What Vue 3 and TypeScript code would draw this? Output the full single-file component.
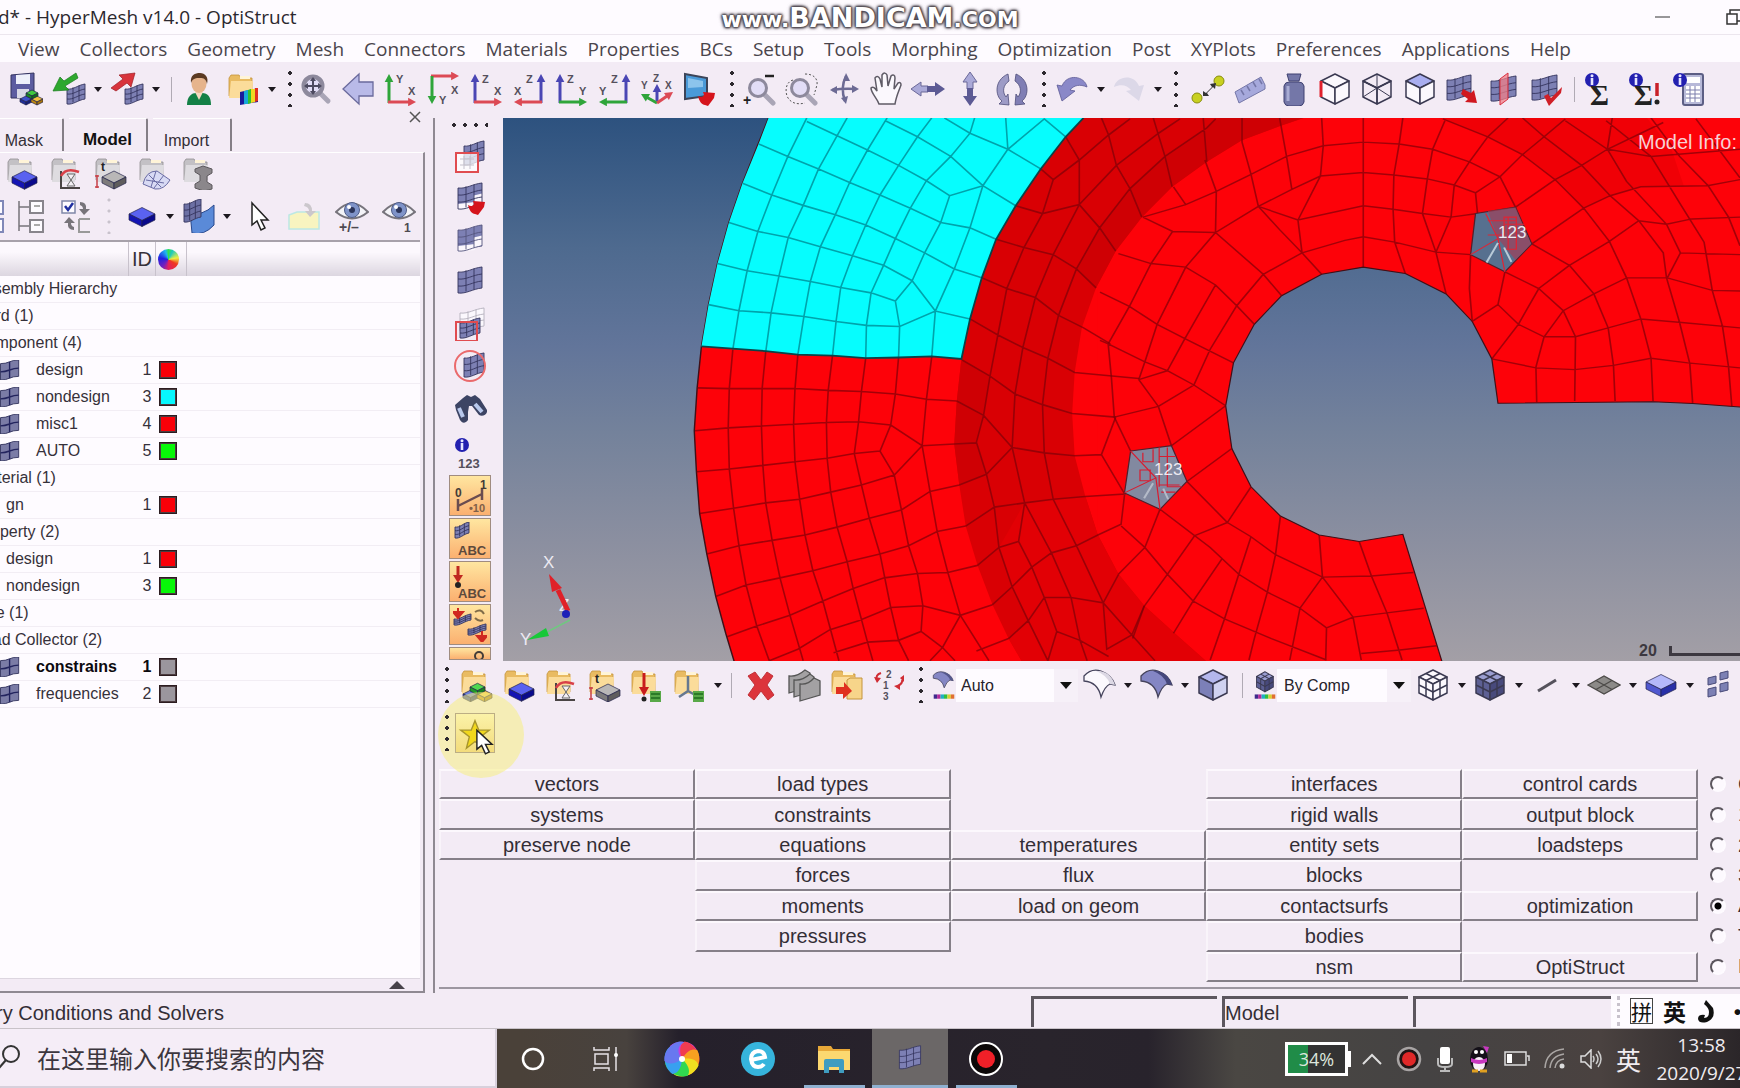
<script setup lang="ts">
import { ref } from 'vue'

type Tool = { icon: string; label: string; menu?: boolean }

/* ---------- icon building blocks (34 x 34 grid) ---------- */
const sheet = (x: number, y: number, w: number, h: number, fill = '#7d80b4', line = '#34345e', part = 'all') => {
  const curve = (cy: number) => `M${x} ${cy + 5}C${x + w * 0.35} ${cy + 6} ${x + w * 0.6} ${cy + 1} ${x + w} ${cy}`
  const body = `<path d="${curve(y)}v${h}C${x + w * 0.6} ${y + h + 1} ${x + w * 0.35} ${y + h + 6} ${x} ${y + h + 5}z" fill="${fill}"/>`
  const rows = [0, 1, 2, 3].map((i) => curve(y + (h * i) / 3)).join('')
  const cols = [0, 1, 2, 3].map((i) => `M${x + (w * i) / 3} ${y + 5 - i * 1.7}v${h}`).join('')
  const gap = part === 'corner' ? `<path d="M${x + w * 0.66} ${y + h * 0.6}l${w * 0.34} -2v${h * 0.45}l-${w * 0.34} 3zM${x} ${y + h}l${w * 0.7} -2v6l-${w * 0.7} 2z" fill="#fbf7fd"/>` : ''
  return `${body}${gap}<path d="${rows}${cols}" fill="none" stroke="${line}" stroke-width=".9"/>`
}
const slab = (x: number, y: number, w: number, top: string, left: string, right: string, d = 6) => {
  const h = w * 0.5
  return `<g stroke="#22224a" stroke-width=".7" stroke-linejoin="round"><path d="M${x} ${y}l${w / 2} -${h / 2}l${w / 2} ${h / 2}l-${w / 2} ${h / 2}z" fill="${top}"/><path d="M${x} ${y}l${w / 2} ${h / 2}v${d}l-${w / 2} -${h / 2}z" fill="${left}"/><path d="M${x + w} ${y}l-${w / 2} ${h / 2}v${d}l${w / 2} -${h / 2}z" fill="${right}"/></g>`
}
const blueSlab = (x: number, y: number, w = 25) => slab(x, y, w, '#5a62f0', '#1414b4', '#0a0a8c')
const graySlab = (x: number, y: number, w = 24) => slab(x, y, w, '#b9b7b7', '#7d7b7b', '#5f5d5d')
const folder = (c1 = '#fbdc9a', c2 = '#e9bb62', e = '#c4943c') =>
  `<path d="M3 6l2-3h8l2 3h11v18H3z" fill="${c2}" stroke="${e}" stroke-width=".8"/><path d="M5 9h22l-1 17H3z" fill="${c1}"/><path d="M14 4h10v3H14z" fill="#fff4d8"/>`
const grayFolder = folder('#dedce0', '#c3c1c5', '#8f8d91')
const letter = (x: number, y: number, t: string, s = 11, f = '#55505c') =>
  `<text x="${x}" y="${y}" font-family="Liberation Sans, sans-serif" font-weight="700" font-size="${s}" fill="${f}">${t}</text>`
const ray = (x1: number, y1: number, x2: number, y2: number, c: string) => {
  const a = Math.atan2(y2 - y1, x2 - x1)
  const p = (k: number, o: number) => `${(x2 - Math.cos(a + o) * k).toFixed(1)} ${(y2 - Math.sin(a + o) * k).toFixed(1)}`
  return `<path d="M${x1} ${y1}L${p(5, 0)}" stroke="${c}" stroke-width="3"/><path d="M${x2} ${y2}L${p(9, 0.5)}L${p(9, -0.5)}z" fill="${c}"/>`
}
const R = '#dc4a55', G = '#2fa53a', B = '#4a46b4'
const cube = (top: string, left: string, right: string, extra = '') =>
  `<g stroke="#3b3a52" stroke-width="1.500" stroke-linejoin="round"><path d="M17 2L31 9L17 16L3 9z" fill="${top}"/><path d="M3 9L17 16V32L3 25z" fill="${left}"/><path d="M31 9L17 16V32L31 25z" fill="${right}"/>${extra}</g>`
const gridCube = (f1: string, f2: string, f3: string) =>
  cube(f1, f2, f3, '<path d="M10 5.500L24 12.500V28.500M24 5.500L10 12.500V28.500M3 17L17 24L31 17" fill="none"/>')
const info = '<circle cx="9" cy="8" r="7" fill="#2320b0"/><path d="M9 6v7" stroke="#e6e6ff" stroke-width="2.600"/><circle cx="9" cy="3.700" r="1.500" fill="#e6e6ff"/>'
const redHook = '<path d="M15 24c3 2 5 1 6-1l-1-3 12 1-1 5-6 8-3-1c-3 0-6-4-7-9z" fill="#d5141c"/>'
const lens = (cx: number, cy: number) => `<path d="M${cx + 6} ${cy + 6}l9 9" stroke="#a9a5b6" stroke-width="5" stroke-linecap="round"/><circle cx="${cx}" cy="${cy}" r="8.500" fill="#e2ddf6" stroke="#8d899c" stroke-width="3"/>`
const eye = '<path d="M1 13Q17 -4 33 13Q17 26 1 13z" fill="#f4f4f8" stroke="#77747c" stroke-width="2"/><circle cx="17" cy="11" r="7.500" fill="#7f93c8" stroke="#4f5c88"/><circle cx="17" cy="11" r="3" fill="#2c355a"/><circle cx="14" cy="8" r="2" fill="#fff"/>'
const rainbow = (y: number) => ['#402a8c', '#b02a9a', '#20b0c0', '#30c040', '#d8d030', '#e07030'].map((c, i) => `<path d="M${i * 4 + 2} ${y}h4v5h-4z" fill="${c}"/>`).join('')
const pointer = (x: number, y: number) => `<path d="M${x} ${y}v22l5-4 4 9 4-2-4-8h7z" fill="#fff" stroke="#222" stroke-width="1.500"/>`
const shell = (f: string, g: string) => `<path d="M2 8Q9 0 19 3Q30 7 33 17L28 16Q23 18 19 29Q16 14 2 13z" fill="${f}" stroke="#45435c" stroke-width="1.300"/><path d="M14 3Q28 2 33 17L28 16Q25 7 14 3z" fill="${g}"/>`

const icons: Record<string, string> = {
  save: `<path d="M2 3l23-2v25L2 26z" fill="#5c5ca0" stroke="#33335e"/><path d="M7 3l14-1v10H7z" fill="#eef0fa"/><path d="M8 17h12v9H8z" fill="#d8d8e6"/>${slab(11, 27, 12, '#3c50c8', '#20309a', '#16207a', 3)}${slab(22, 27, 12, '#f0c040', '#c08a10', '#a87408', 3)}${slab(17, 21, 12, '#40c840', '#188a20', '#107018', 3)}`,
  importMesh: `${sheet(15, 12, 18, 15)}<path d="M24 1l-12 8-4-4-7 14 16-1-4-4 13-8z" fill="#2ea82e" stroke="#187a1c" stroke-width=".7"/>`,
  exportMesh: `${sheet(15, 12, 18, 15)}<path d="M1 16l12-9-4-4 16-2-4 14-4-4-11 8z" fill="#d8343c" stroke="#9c1c24" stroke-width=".7"/>`,
  user: '<path d="M4 33c0-9 5-12 9-12h6c6 0 9 4 9 12z" fill="#138046"/><path d="M12 20h8l-4 8z" fill="#f4d8c0"/><ellipse cx="16" cy="12" rx="7.500" ry="9" fill="#e6b48c"/><path d="M8 11c-1-8 4-10 9-10s9 4 7 11c-1-5-3-6-7-6s-7 0-9 5z" fill="#5b3a22"/>',
  results: `${folder()}<path d="M14 20l18-4v14l-18 3z" fill="#1a1a9a"/><path d="M18 19l4-1v14l-4 0z" fill="#18a8d8"/><path d="M22 18l3-1v14l-3 1z" fill="#30c030"/><path d="M25 17l4 0v13l-4 1z" fill="#f0d820"/><path d="M29 16l3 0v13l-3 1z" fill="#e03020"/>`,
  fit: `${lens(14, 14)}<circle cx="14" cy="14" r="10" fill="none" stroke="#8d899c" stroke-width="3"/><path d="M14 8v12M8 14h12" stroke="#4d4a60" stroke-width="2"/><path d="M14 5l3 4h-6zM14 23l3-4h-6zM5 14l4-3v6zM23 14l-4-3v6z" fill="#4d4a60"/>`,
  back: '<path d="M1 17L17 2v8h14v14H17v8z" fill="#b9bae8" stroke="#6a6a9c" stroke-width="1.300"/>',
  xyTop: ray(5, 31, 5, 2, G) + ray(4, 30, 32, 30, R) + letter(12, 11, 'Y') + letter(24, 23, 'X'),
  xyBottom: ray(4, 4, 32, 4, R) + ray(5, 4, 5, 32, G) + letter(24, 22, 'X') + letter(12, 32, 'Y'),
  xzFront: ray(5, 31, 5, 2, B) + ray(4, 30, 32, 30, R) + letter(12, 11, 'Z') + letter(24, 23, 'X'),
  xzBack: ray(29, 31, 29, 2, B) + ray(30, 30, 2, 30, R) + letter(14, 11, 'Z') + letter(2, 23, 'X'),
  yzFront: ray(5, 31, 5, 2, B) + ray(4, 30, 32, 30, G) + letter(12, 11, 'Z') + letter(24, 23, 'Y'),
  yzBack: ray(29, 31, 29, 2, B) + ray(30, 30, 2, 30, G) + letter(14, 11, 'Z') + letter(2, 23, 'Y'),
  iso: ray(17, 30, 17, 12, B) + ray(17, 31, 1, 22, G) + ray(17, 31, 33, 20, R) + letter(13, 10, 'Z', 10) + letter(1, 17, 'Y', 10) + letter(25, 17, 'X', 10),
  window: `<path d="M2 2l22 4v18L2 27z" fill="#4a9ad8" stroke="#3c4458" stroke-width="2"/><path d="M5 6l15 3v6L5 16z" fill="#8cc4ec"/>${redHook}`,
  zoomInOut: `${lens(15, 16)}${letter(0, 33, '+', 14, '#222')}<path d="M22 4h9" stroke="#222" stroke-width="2.500"/>`,
  zoomCircle: `${lens(15, 16)}<path d="M20 2c8 0 13 4 12 11l-3 10M8 8c-7 2-8 10-6 16 3 7 10 9 18 7" fill="none" stroke="#555" stroke-dasharray="2 2"/>`,
  rotate: '<path d="M5 18q12-2 24-1M18 29q-5-13 1-25" stroke="#6c6a94" stroke-width="2.500" fill="none"/><path d="M3 18l7-4v8zM32 17l-7-4v8zM19 1l4 8h-7zM19 32l2-8-7 2z" fill="#6c6a94"/>',
  pan: '<path d="M10 32C8 26 2 21 2 16c2-2 4 0 6 3L6 6c2-3 4-1 5 1l2 8 0-12c2-3 4-2 5 0l1 11 3-10c2-2 4-1 4 2l-1 11 4-6c2-1 3 0 3 2-3 8-5 12-6 19z" fill="#fbf8fd" stroke="#5f5b66" stroke-width="1.500"/>',
  horizontal: '<path d="M0 17l10-7v4h7v6h-7v4z" fill="#aaa9d8" stroke="#6a6898"/><path d="M34 17l-10-7v4h-8v6h8v4z" fill="#5c5a94"/>',
  vertical: '<path d="M17 0l7 10h-4v7h-6v-7h-4z" fill="#aaa9d8" stroke="#6a6898"/><path d="M17 34l7-10h-4v-8h-6v8h-4z" fill="#5c5a94"/>',
  spin: '<path d="M13 2C-1 8 0 24 7 29l-3 3 10 1-1-11-2 3c-4-5-3-12 3-16z" fill="#9d9bc6" stroke="#4e4c78" stroke-width=".8"/><path d="M21 2c14 6 13 22 6 27l3 3-10 1 1-11 2 3c4-5 3-12-3-16z" fill="#807eb4" stroke="#4e4c78" stroke-width=".8"/>',
  undo: '<path d="M2 13l5 16 13-10-5-1c4-5 10-6 17-3C30 4 12 1 7 14z" fill="#8a88c8" stroke="#5d5b96" stroke-width=".8"/>',
  redo: '<path d="M32 13l-5 16-13-10 5-1c-4-5-10-6-17-3C4 4 22 1 27 14z" fill="#dcd8e8"/>',
  nodes: '<circle cx="6" cy="26" r="5" fill="#c8d020" stroke="#888c10"/><circle cx="28" cy="9" r="5" fill="#c8d020" stroke="#888c10"/><path d="M12 24v-5l3 2 6-6-2-3 6-1-1 6-2-2-6 6 2 3z" fill="#333"/>',
  ruler: '<path d="M2 20L28 5l4 8v4L6 31z" fill="#a6a9dc" stroke="#7577a8"/><path d="M8 18l3 5M14 14l3 5M20 10l3 5M26 7l3 5" stroke="#7577a8" stroke-width="1.500"/>',
  weight: '<path d="M11 2h14l-2 7H13zM8 14q1-4 5-4h10q4 0 5 4v16q-1 4-5 4H13q-4 0-5-4z" fill="#7477a8" stroke="#3f4170"/><path d="M12 14v15" stroke="#a9acd4" stroke-width="3"/>',
  cubeEdge: cube('#fbf8fd', '#fbf8fd', '#fbf8fd', '<path d="M3 9v16" stroke="#e0202c" stroke-width="3"/>'),
  cubeWire: cube('none', 'none', 'none', '<path d="M17 2v14M3 25l14-9 14 9M3 9l14 7" fill="none" stroke-width="1"/>'),
  cubeFace: cube('#a9aef0', '#fbf8fd', '#fbf8fd'),
  meshMove: `${sheet(2, 3, 24, 20)}<path d="M18 17l8 4 3-3 3 13-12-1 3-3-7-5z" fill="#d01820"/>`,
  meshPlane: `${sheet(4, 4, 25, 20)}<path d="M13 7l8-6v26l-8 6z" fill="#f08088" fill-opacity=".75" stroke="#d83040"/>`,
  meshCheck: `${sheet(2, 3, 25, 20)}<path d="M14 24l4-2 3 4 11-11-1 6-12 13z" fill="#d02028"/>`,
  sum: `${info}<text x="7" y="33" font-family="Liberation Serif, serif" font-weight="700" font-size="29" fill="#222">Σ</text>`,
  sumAlert: `${info}<text x="7" y="33" font-family="Liberation Serif, serif" font-weight="700" font-size="29" fill="#222">Σ</text><path d="M30 11v13" stroke="#c82028" stroke-width="3.500"/><circle cx="30" cy="30" r="2.500" fill="#222"/>`,
  calc: `<rect x="12" y="2" width="20" height="31" rx="2" fill="#b7b9d8" stroke="#5c5e84" stroke-width="2"/><path d="M15 5h14v6H15z" fill="#fff"/><path d="M15 14h14v16H15z" fill="#fff"/><path d="M15 18h14M15 22h14M15 26h14M19 14v16M24 14v16" stroke="#7c7eac"/>${info}`,
  newComp: grayFolder + blueSlab(7, 21),
  newMat: `${grayFolder}<path d="M12 15v18M11 32h20" stroke="#4a4444" stroke-width="2"/><path d="M12 20q5-9 18-4" fill="none" stroke="#d84048" stroke-width="2.500"/><path d="M18 18h8l-8 12h8z" fill="#f4f0f4" stroke="#666"/>`,
  newProp: grayFolder + graySlab(9, 21) + letter(8, 15, 't', 12, '#222') + '<path d="M4 19v13M2 20h4M2 31h4" stroke="#c84048" stroke-width="1.500"/>',
  newMesh: `${grayFolder}<path d="M6 28q3-13 14-13l13 9q-6 10-15 9z" fill="#d8daf4" stroke="#6a6ca4"/><path d="M12 19l12 12M9 24l18 3M19 15l-5 16M27 19l-10 13" stroke="#6a6ca4"/>`,
  newBeam: `${grayFolder}<path d="M14 13l8-3 9 3v4l-5 3v6l5 3v4l-8 2-9-3v-4l5-3v-6l-5-3z" fill="#8b878b" stroke="#5c585c"/>`,
  listEdge: '<path d="M-12 2h15v13h-15zM-12 20h15v13h-15z" fill="#fdfbff" stroke="#8088b8" stroke-width="2"/>',
  tree: '<path d="M2 2v30M2 8h10M2 27h10" stroke="#77747a" stroke-width="1.500"/><path d="M13 2h13v12H13zM13 21h13v12H13z" fill="#fdfbff" stroke="#88858c" stroke-width="2"/><path d="M17 7h6M17 26h6" stroke="#aaa" stroke-width="2"/>',
  swap: '<path d="M2 2h13v12H2z" fill="#fdfbff" stroke="#8088a8" stroke-width="1.500"/><path d="M5 7l3 4 5-7" fill="none" stroke="#2030a0" stroke-width="2.500"/><path d="M20 3q7 0 6 7h4l-6 6-5-6h4q0-3-3-4zM14 31q-7 0-6-7H4l5-6 6 6h-4q0 3 3 4z" fill="#77747a"/><path d="M19 20h11M19 20v13h11" fill="none" stroke="#999" stroke-width="2"/>',
  blue: blueSlab(4, 15, 26),
  surfaces: `<path d="M8 13q12 5 24-7v20q-10 11-22 8z" fill="#5a8ad8" stroke="#28488c"/>${sheet(2, 0, 17, 18, '#6c70a4')}`,
  cursor: pointer(11, 4),
  faded: '<path d="M1 16l8-3h22v17H1z" fill="#f8f4c0" stroke="#bce8e4" stroke-width="1.500"/><path d="M17 4q7 0 7 8h4l-6 6-5-6h4q0-4-5-5z" fill="#cbc7cc"/>',
  eyePlus: eye + letter(4, 33, '+/–', 14, '#4e4a50'),
  eyeOne: eye + letter(22, 33, '1', 12, '#4e4a50'),
  vMask: `${sheet(11, 2, 20, 19)}<path d="M3 14h22v19H3z" fill="#fff" fill-opacity=".75" stroke="#e04c50" stroke-width="2"/><path d="M7 20h14M7 26h14M11 17v13M17 17v13" stroke="#c4c0cc"/>`,
  vReverse: sheet(5, 2, 24, 21, '#7d80b4', '#34345e', 'corner') + redHook,
  vPart: sheet(5, 2, 24, 21, '#7d80b4', '#55557e', 'corner'),
  vAll: sheet(5, 2, 24, 21),
  vNotShown: `${sheet(7, 1, 24, 18, '#fbf8fd', '#b4b0bc')}${sheet(7, 11, 20, 15)}<path d="M3 15h21v19H3z" fill="none" stroke="#e04c50" stroke-width="2"/>`,
  vSphere: `${sheet(11, 4, 20, 19)}<circle cx="17" cy="17" r="15" fill="none" stroke="#ea6a6c" stroke-width="2"/>`,
  binoculars: '<path d="M2 13l8-7 4-3 4 2 4-2 5 4 7 11c1 5-5 7-8 5l-7-9-3 0-1 6 0 8c-3 4-6 3-8 0l-4-10z" fill="#3c4464"/><path d="M6 16l4 9M22 12l7 8" stroke="#b8c8ec" stroke-width="4"/>',
  vInfo: `<g transform="translate(0 1)">${info}</g>${letter(5, 32, '123', 13)}`,
  tVector: letter(2, 18, '0', 12, '#443c38') + letter(27, 10, '1', 12, '#443c38') + letter(16, 33, '•10', 11, '#806048') + '<path d="M5 20v12M5 27L29 15M29 10v11" stroke="#6a4c50" stroke-width="2.500"/>',
  tElem: sheet(2, 0, 14, 11) + letter(5, 33, 'ABC', 13, '#5e4a3c'),
  tLoad: `<path d="M5 1v11" stroke="#c02820" stroke-width="3"/><path d="M0 10h10l-5 8z" fill="#c02820"/><circle cx="5" cy="20" r="3" fill="#222"/>${letter(5, 33, 'ABC', 13, '#5e4a3c')}`,
  tSwap: `${sheet(1, 6, 17, 6)}${sheet(15, 16, 18, 6)}<path d="M5 0v4M0 4h10l-5 6zM29 23v5M24 28h10l-5 6z" fill="#d02820" stroke="#d02820" stroke-width="2"/><path d="M22 4q6-4 9 2M22 10q4 4 8 2" fill="none" stroke="#806c48" stroke-width="2"/>`,
  tMore: '<circle cx="26" cy="6" r="4" fill="none" stroke="#443c38" stroke-width="2"/><path d="M20 10h11" stroke="#443c38" stroke-width="2"/>',
  fAssembly: folder() + slab(4, 26, 15, '#6c80d8', '#3a4ca8', '#2c3c88', 4) + slab(18, 26, 15, '#f0c850', '#c89020', '#a87810', 4) + slab(11, 19, 15, '#50d850', '#209a28', '#188020', 4),
  fComp: folder() + blueSlab(7, 21),
  fMat: `${folder()}<path d="M12 15v18M11 32h20" stroke="#4a4444" stroke-width="2"/><path d="M12 20q5-9 18-4" fill="none" stroke="#d84048" stroke-width="2.500"/><path d="M18 18h8l-8 12h8z" fill="#f4f0f4" stroke="#666"/>`,
  fProp: folder() + graySlab(9, 22) + letter(8, 15, 't', 12, '#222') + '<path d="M4 19v13M2 20h4M2 31h4" stroke="#c84048" stroke-width="1.500"/>',
  fLoad: `${folder()}<path d="M15 5v16" stroke="#c81c1c" stroke-width="3"/><path d="M10 19h10l-5 9z" fill="#c81c1c"/><circle cx="15" cy="31" r="2.500" fill="#222"/><path d="M21 23h11v11H21z" fill="#58a848"/><path d="M22 26h9M22 30h9" stroke="#1e6c1e" stroke-width="1.500"/>`,
  fSys: `${folder()}<path d="M16 8v15l-9 6M16 23l9 5" stroke="#667890" stroke-width="2.500" fill="none"/><path d="M21 23h11v11H21z" fill="#58a848"/><path d="M22 26h9M22 30h9" stroke="#1e6c1e" stroke-width="1.500"/>`,
  delete: '<path d="M4 8l7-4 6 8 6-8 6 4-6 9 7 10-6 5-7-9-7 9-6-5 7-10z" fill="#dc343c" stroke="#c03038"/>',
  organize: '<g fill="#a3a1a3" stroke="#555" stroke-width="1.300"><path d="M2 8q8 1 16-6l5 3v14L2 25z"/><path d="M7 12q8 1 16-6l4 3v14L7 29z"/><path d="M13 16q8 1 14-6l6 3v14l-20 6z"/></g>',
  fMove: `${folder()}<path d="M18 12l3-2h12v21H18z" fill="#f7d58a" stroke="#c4943c"/><path d="M7 19h8v-5l8 9-9 8v-5H7z" fill="#e03020"/>`,
  renumber: letter(14, 10, '2', 10) + letter(11, 21, '1', 10) + letter(11, 32, '3', 10) + '<path d="M9 5q-6 2-4 7M26 18q5-3 4-6" fill="none" stroke="#d02c34" stroke-width="2"/><path d="M2 9l3 6 4-5zM28 10l4 4 0-7zM22 18l6 4 0-6z" fill="#d02c34"/>',
  autoColor: `<g transform="scale(.75 .7)">${shell('#8486c4', '#55578c')}</g>${rainbow(28)}`,
  compColor: `<g transform="translate(2 0) scale(.7 .78)">${gridCube('#9a9dd0', '#5d6094', '#484a7c')}</g>${rainbow(28)}`,
  shellWire: shell('#fbf8fd', '#dcd8e4'),
  shellFill: shell('#8486c4', '#45477c'),
  cubeSolid: cube('#b4b7ec', '#7c80b8', '#d0d2f0'),
  gridWire: gridCube('#fbf8fd', '#fbf8fd', '#fbf8fd'),
  gridFill: gridCube('#9a9dd0', '#5d6094', '#484a7c'),
  line: '<path d="M8 23L26 12" stroke="#55525c" stroke-width="3"/>',
  flat: '<path d="M1 17L17 8l16 9-16 9z" fill="#8c8a88" stroke="#4c4a48" stroke-width="1.300"/><path d="M9 12.500l16 9M25 12.500l-16 9" stroke="#4c4a48" stroke-width="1.300"/>',
  slab: slab(2, 14, 30, '#b4b8fa', '#5058d0', '#2830a8', 7),
  shrink: '<g fill="#7c80b4" stroke="#484a78"><path d="M7 10l8-2v7l-8 2zM19 5l8-2v7l-8 2zM7 21l8-2v8l-8 2zM19 16l8-2v8l-8 2z"/></g>',
}

const menus = ['View', 'Collectors', 'Geometry', 'Mesh', 'Connectors', 'Materials', 'Properties', 'BCs', 'Setup', 'Tools', 'Morphing', 'Optimization', 'Post', 'XYPlots', 'Preferences', 'Applications', 'Help']

const t = (icon: string, label: string, menu = false): Tool => ({ icon, label, menu })
const fileTools = [t('save', 'Save model'), t('importMesh', 'Import', true), t('exportMesh', 'Export', true)]
const userTools = [t('user', 'User profile'), t('results', 'Load results', true)]
const viewTools = [t('fit', 'Fit'), t('back', 'Previous view'), t('xyTop', 'XY top'), t('xyBottom', 'XY bottom'), t('xzFront', 'XZ front'), t('xzBack', 'XZ back'), t('yzFront', 'YZ left'), t('yzBack', 'YZ right'), t('iso', 'Isometric'), t('window', 'Reverse view')]
const zoomTools = [t('zoomInOut', 'Zoom'), t('zoomCircle', 'Circle zoom'), t('rotate', 'Rotate'), t('pan', 'Pan'), t('horizontal', 'Pan horizontally'), t('vertical', 'Pan vertically'), t('spin', 'Spin')]
const undoTools = [t('undo', 'Undo', true), t('redo', 'Redo', true)]
const checkTools = [t('nodes', 'Distance'), t('ruler', 'Length'), t('weight', 'Mass'), t('cubeEdge', 'Edges'), t('cubeWire', 'Features'), t('cubeFace', 'Faces'), t('meshMove', 'Normals'), t('meshPlane', 'Penetration'), t('meshCheck', 'Check elements')]
const sumTools = [t('sum', 'Summary'), t('sumAlert', 'Model checker'), t('calc', 'Count')]

const createTools = [t('newComp', 'New component'), t('newMat', 'New material'), t('newProp', 'New property'), t('newMesh', 'New set'), t('newBeam', 'New beam section')]
const sideTools = [t('vMask', 'Mask'), t('vReverse', 'Reverse'), t('vPart', 'Unmask adjacent'), t('vAll', 'Unmask all'), t('vNotShown', 'Mask not shown'), t('vSphere', 'Spherical clipping'), t('binoculars', 'Find'), t('vInfo', 'Numbers')]
const tileTools = [t('tVector', 'Vector scale'), t('tElem', 'Element labels'), t('tLoad', 'Load labels'), t('tSwap', 'Load handles')]
const collectorTools = [t('fAssembly', 'Assemblies'), t('fComp', 'Components'), t('fMat', 'Materials'), t('fProp', 'Properties'), t('fLoad', 'Load collectors'), t('fSys', 'System collectors')]
const editTools = [t('delete', 'Delete'), t('organize', 'Card edit'), t('fMove', 'Organize'), t('renumber', 'Renumber')]
const shellTools = [t('shellWire', 'Wireframe geometry', true), t('shellFill', 'Shaded geometry', true), t('cubeSolid', 'Transparency')]
const meshTools = [t('gridWire', 'Wireframe elements', true), t('gridFill', 'Shaded elements', true), t('line', '1D display', true), t('flat', '2D display', true), t('slab', 'Layers', true), t('shrink', 'Shrink elements')]

type Row = { name: string; depth: number; id?: number; color?: string; bold?: boolean }
const rows: Row[] = [
  { name: 'Assembly Hierarchy', depth: 0 },
  { name: 'Card (1)', depth: 0 },
  { name: 'Component (4)', depth: 0 },
  { name: 'design', depth: 2, id: 1, color: '#f90008' },
  { name: 'nondesign', depth: 2, id: 3, color: '#08f8fe' },
  { name: 'misc1', depth: 2, id: 4, color: '#f90008' },
  { name: 'AUTO', depth: 2, id: 5, color: '#08f808' },
  { name: 'Material (1)', depth: 0 },
  { name: 'gn', depth: 1, id: 1, color: '#f90008' },
  { name: 'Property (2)', depth: 0 },
  { name: 'design', depth: 1, id: 1, color: '#f90008' },
  { name: 'nondesign', depth: 1, id: 3, color: '#08f808' },
  { name: 'Title (1)', depth: 0 },
  { name: 'Load Collector (2)', depth: 0 },
  { name: 'constrains', depth: 2, id: 1, color: '#9b969d', bold: true },
  { name: 'frequencies', depth: 2, id: 2, color: '#9b969d' },
]

const panel: string[][] = [
  ['vectors', 'load types', '', 'interfaces', 'control cards'],
  ['systems', 'constraints', '', 'rigid walls', 'output block'],
  ['preserve node', 'equations', 'temperatures', 'entity sets', 'loadsteps'],
  ['', 'forces', 'flux', 'blocks', ''],
  ['', 'moments', 'load on geom', 'contactsurfs', 'optimization'],
  ['', 'pressures', '', 'bodies', ''],
  ['', '', '', 'nsm', 'OptiStruct'],
]
const pages = ['Geom', '1D', '2D', '3D', 'Analysis', 'Tool', 'Post']
const page = ref('Analysis')
const geomColor = ref('Auto')
const elemColor = ref('By Comp')

/* ---------- mesh edges ---------- */
const poly = (list: string[]) => list.map((p) => 'M' + p.split(' ').join('L')).join('')

const cyanLines = poly([
  '355,22 302,130 257,238 218,340 188,450 165,562 148,670',
  '468,22 440,72 388,165 345,267 303,357 277,465 255,568 240,677',
  '580,22 525,112 475,203 435,293 393,383 365,480 347,578 330,685',
  '705,22 665,75 612,155 560,238 520,322 483,408 450,497 437,592 427,688',
  '825,22 812,65 758,130 690,198 645,275 603,360 570,435 535,512 522,603 520,695',
  '603,535 615,606 612,692',
  '690,198 755,240 848,212', '755,240 730,315 685,400 650,478',
  '912,22 918,110 848,212 812,330 768,445 715,563 705,690',
  '1080,75 1020,25 918,110',
  '220,95 302,130 388,165 475,203 560,238 645,275 730,315 812,330 885,362',
  '355,32 440,72 525,112 612,155 690,198',
  '175,205 257,238 345,267 435,293 520,322 603,360 685,400 768,445 845,470',
  '137,315 218,340 303,357 393,383 483,408 570,435 650,478 715,563',
  '105,430 188,450 277,465 365,480 450,497 535,512 603,535 650,478',
  '80,545 165,562 255,568 347,578 437,592 522,603 615,606 715,563 812,585',
  '575,30 665,75 758,130 848,212 940,268',
  '740,22 812,65 918,110 1010,165',
])
const ringLines = poly([
  '148,670 138,780 135,890 138,1005 150,1115 165,1220 185,1330 215,1445 250,1542',
  '240,677 230,780 228,885 232,995 240,1100 258,1205 280,1310 308,1415 345,1542',
  '330,685 322,780 318,880 322,985 335,1090 350,1190 372,1290 400,1375 445,1542',
  '427,688 415,785 410,875 412,975 422,1070 440,1168 468,1265 485,1340 525,1490 540,1542',
  '520,695 508,788 500,873 488,962 508,1050 530,1143 560,1243 590,1393 612,1485 640,1542',
  '612,692 603,795 590,882 560,955 600,1022 620,1120 640,1220 665,1298 680,1388 675,1460',
  '705,690 690,810 678,940 700,1068 720,1180 750,1295 785,1415 735,1505',
  '48,778 138,780 230,780 322,780 415,785 508,788 603,795 690,810 775,815',
  '42,898 135,890 228,885 318,880 410,875 500,873 590,882 678,940 768,935 830,932',
  '46,1013 138,1005 232,995 322,985 412,975 488,962 560,955',
  '55,1130 150,1115 240,1100 335,1090 422,1070 508,1050 600,1022 678,940',
  '75,1243 165,1220 258,1205 350,1190 440,1168 530,1143 620,1120 700,1068 782,1050 858,1020 930,945',
  '100,1362 185,1330 280,1310 372,1290 468,1265 560,1243 640,1220 720,1180 800,1165',
  '132,1475 215,1445 308,1415 400,1375 485,1340 572,1310 665,1298 750,1295 833,1275',
  '250,1542 330,1510 420,1455 500,1430 590,1393 680,1388 785,1415 875,1385',
  '430,1520 525,1490 612,1485 675,1460 735,1505 770,1542',
  '700,1542 735,1505', '785,1415 865,1542', '830,1515 920,1480',
  '1080,75 1118,140 1118,265 1175,330 1220,395',
  '1180,22 1200,70 1222,155 1260,220 1293,300',
  '1325,22 1358,130 1378,215',
  '1465,22 1475,145',
  '1010,165 1045,195 1118,140 1200,70 1260,25',
  '940,268 1015,290 1118,265 1222,155 1340,65 1400,25',
  '1175,330 1260,220 1358,130 1475,50 1500,25',
  '1045,195 1015,290 963,385 915,500 890,630 868,745 850,855 830,930 858,1020 880,1112 893,1225 930,1335 975,1430 1030,1542',
  '885,362 963,385 1045,405 1110,445 1165,498',
  '1175,330 1110,445 1060,575 1030,695 1015,825 1020,960 1045,1090 1110,1220 1185,1380 1265,1470 1330,1542',
  '1118,265 1045,405 995,525 960,665 938,795 930,945 965,1100 1040,1240 1095,1365 1120,1485 1140,1542',
  '845,470 915,500 995,525 1060,575 1130,610 1205,655',
  '812,585 890,630 960,665 1030,695 1105,735 1285,752',
  '790,700 868,745 938,795 1015,825 1098,850 1220,860',
  '775,815 850,855 930,945 1020,960 1105,968 1180,965 1220,860',
  '1180,965 1245,1075 1135,1082 1045,1090 965,1100 880,1112 800,1165',
  '833,1275 893,1225 948,1208 965,1100',
  '948,1208 985,1280 1020,1365 1055,1460 1030,1542',
  '875,1385 930,1335 985,1280 1040,1240 1110,1220 1170,1190 1235,1160 1245,1075',
  '920,1480 975,1430 1020,1365 1095,1365 1185,1380 1228,1300',
  '1055,1460 1120,1485 1200,1530', '1185,1380 1195,1510 1265,1470 1300,1388',
])
const rightLines = poly([
  '348,22 348,90', '440,22 457,130 470,222', '257,140 285,228 283,343', '348,90 370,180 388,270 440,335 495,400 543,460',
  '543,22 547,100 540,185 485,308 495,400', '645,22 645,440',
  '742,22 733,95 720,182 718,278 722,370 748,458', '845,30 815,110 802,193 790,290 823,398 848,515',
  '950,75 905,145 868,210 860,300 823,398',
  '180,215 210,265 285,228 370,180 457,130 547,100 645,90 733,95 815,110 905,145 980,187 1018,272',
  '105,300 178,340 283,343 388,270 470,222 540,185 645,175 720,182 802,193 868,210 920,232 925,290',
  '105,300 210,265', '388,270 485,308 645,268 718,278 790,290 860,300 925,290',
  '283,343 400,460 445,520', '400,460 495,400 600,365 645,355 722,370 823,398 908,405 905,500 912,592',
  '45,402 125,430 210,440 283,490 335,548 378,600',
  '178,340 125,430 72,550 20,655 28,750 35,860', '283,343 210,440 140,600 110,705 95,755',
  '400,460 335,548 270,670 230,770 143,830', '283,490 208,640 165,730',
  '0,510 72,550 140,600 208,640 327,708', '0,645 20,655 110,705 165,730 230,770 308,828',
  '95,755 165,730', '95,755 143,830 175,940', '35,860 143,830', '35,860 75,955', '175,940 308,828', '213,1040 323,948',
  '213,1040 312,1155 370,1055', '147,1118 270,1225 340,1300 410,1350 490,1395',
  '312,1155 370,1195 430,1245 545,1308 665,1305 768,1295',
  '147,1118 232,1192', '410,1350 490,1395 555,1450 620,1420 545,1308',
  '232,1192 312,1155', '442,1137 430,1245 410,1350 378,1480 365,1540', '370,1195 340,1300 305,1425 270,1540',
  '537,1190 545,1308 490,1395 465,1540', '635,1208 665,1305 703,1408 740,1540',
  '147,1118 110,1225 45,1300', '52,1165 110,1225 165,1300 228,1375 305,1425 420,1480 555,1540',
  '232,1192 165,1300 108,1390 80,1480', '300,1255 228,1375 180,1465', '620,1420 640,1540', '555,1450 553,1540',
  '620,1420 703,1408 793,1395', '640,1522 735,1512 825,1500',
  '840,25 950,75 1035,125 1115,195 1185,275 1248,368 1290,470 1325,585 1350,695 1355,815',
  '950,75 1000,22', '980,187 1035,125 1088,75 1140,25', '920,232 980,187', '1035,22 1088,75 1180,155 1250,240 1320,310 1380,400 1388,470 1420,595 1445,710 1452,820',
  '1018,272 1115,195 1180,155 1243,110 1380,35', '1140,30 1243,110 1290,200 1388,320 1422,400',
  '1255,22 1243,110 1350,130 1568,110', '1058,375 1185,275 1250,240 1325,215 1488,212 1568,195',
  '1150,435 1248,368 1320,310 1388,320 1450,305 1568,300', '1240,30 1350,130 1420,260 1480,370 1500,505 1525,605 1540,720 1548,830',
  '1350,22 1420,130 1490,212 1540,300 1568,380', '1460,25 1568,190',
  '1058,375 1150,435 1210,515 1245,610 1258,715 1262,815', '1075,500 1150,435', '992,453 1075,500 1135,562 1165,635 1163,815',
  '992,453 975,545 912,592', '975,545 1025,600 1088,635 1165,635 1245,610 1325,585 1425,595 1568,610',
  '1088,635 1068,720 1070,818', '960,697 1025,600 1075,500', '960,697 1068,722 1163,727 1258,715 1350,695 1440,708 1568,722',
  '1088,635 1135,562 1210,515 1290,470 1390,470 1500,505 1568,507', '1390,470 1422,400 1568,405',
])
</script>

<template>
  <div class="app">
    <header class="title-bar">
      <span class="title">d* - HyperMesh v14.0 - OptiStruct</span>
      <span class="watermark"><small>www.</small>BANDICAM<small>.COM</small></span>
      <span class="win-buttons">
        <button aria-label="Minimize"><svg width="16" height="16"><path d="M0 8h15" stroke="#333" /></svg></button>
        <button aria-label="Restore"><svg width="16" height="16"><path d="M1 5h10v10H1zM4 5V1h11v11h-4" fill="none" stroke="#333" stroke-width="1.500" /></svg></button>
      </span>
    </header>

    <nav class="menu-bar">
      <button v-for="m in menus" :key="m">{{ m }}</button>
    </nav>

    <div class="toolbar top">
      <template v-for="(g, gi) in [fileTools, userTools, viewTools, zoomTools, undoTools, checkTools, sumTools]" :key="gi">
        <i v-if="gi === 1 || gi === 6" :class="['sep', { tight: gi === 6 }]"></i>
        <i v-else-if="gi > 0" class="grip"></i>
        <div :class="['group', 'g' + gi]">
          <template v-for="b in g" :key="b.label">
            <button class="cell" :aria-label="b.label"><svg viewBox="0 0 34 34" v-html="icons[b.icon]"></svg></button>
            <i v-if="b.menu" class="caret"></i>
          </template>
        </div>
      </template>
    </div>

    <main class="main">
      <aside class="browser">
        <div class="tabs">
          <button>Mask</button>
          <button class="active">Model</button>
          <button>Import</button>
          <button class="close" aria-label="Close"><svg width="12" height="12"><path d="M1 1l10 10M11 1L1 11" stroke="#555" stroke-width="1.500" /></svg></button>
        </div>
        <div class="pane">
          <div class="row-create">
            <button v-for="b in createTools" :key="b.label" class="cell" :aria-label="b.label"><svg viewBox="0 0 34 34" v-html="icons[b.icon]"></svg></button>
          </div>
          <div class="row-select">
            <button class="edge" aria-label="Check all"><svg viewBox="0 0 10 34" v-html="icons.listEdge"></svg></button>
            <button class="cell" aria-label="Tree"><svg viewBox="0 0 34 34" v-html="icons.tree"></svg></button>
            <button class="cell" aria-label="Reverse selection"><svg viewBox="0 0 34 34" v-html="icons.swap"></svg></button>
            <i class="grip faint"></i>
            <button class="cell" aria-label="Components"><svg viewBox="0 0 34 34" v-html="icons.blue"></svg></button>
            <i class="caret"></i>
            <button class="cell" aria-label="Elements and geometry"><svg viewBox="0 0 34 34" v-html="icons.surfaces"></svg></button>
            <i class="caret"></i>
            <button class="cell wide" aria-label="Select"><svg viewBox="0 0 34 34" v-html="icons.cursor"></svg></button>
            <button class="cell wide" aria-label="Add to panel"><svg viewBox="0 0 34 34" v-html="icons.faded"></svg></button>
            <button class="cell wide" aria-label="Show or hide"><svg viewBox="0 0 34 34" v-html="icons.eyePlus"></svg></button>
            <button class="cell wide" aria-label="Isolate"><svg viewBox="0 0 34 34" v-html="icons.eyeOne"></svg></button>
          </div>
          <div class="tree-wrap">
            <table class="tree">
              <thead>
                <tr><th class="c-name" aria-label="Entities"></th><th class="c-id">ID</th><th class="c-color" aria-label="Color"><i class="wheel"></i></th><th aria-label="More"></th></tr>
              </thead>
              <tbody>
                <tr v-for="(r, i) in rows" :key="i" :class="{ bold: r.bold }">
                  <td :class="'depth' + r.depth">
                    <svg v-if="r.depth === 2" width="21" height="20" viewBox="0 0 22 22"><path d="M0 4q6 0 10-2t10-2v18q-6 0-10 2T0 22z" fill="#7b7ca6" stroke="#33345e" /><path d="M10 2v18M0 13q5 0 10-2t10-2" fill="none" stroke="#23245e" stroke-width="1.500" /></svg><span>{{ r.name }}</span>
                  </td>
                  <td class="id">{{ r.id }}</td>
                  <td class="color"><i v-if="r.color" class="swatch" :style="{ background: r.color }"></i></td>
                  <td></td>
                </tr>
              </tbody>
            </table>
          </div>
          <div class="pane-foot"><i></i></div>
        </div>
      </aside>

      <section class="work">
        <div class="stage">
          <div class="side">
            <i class="hgrip"></i>
            <button v-for="b in sideTools" :key="b.label" class="side-cell" :aria-label="b.label"><svg viewBox="0 0 34 34" v-html="icons[b.icon]"></svg></button>
            <button v-for="b in tileTools" :key="b.label" class="tile" :aria-label="b.label"><svg viewBox="0 0 34 34" v-html="icons[b.icon]"></svg></button>
            <button class="tile last" aria-label="More"><svg viewBox="0 0 34 34" v-html="icons.tMore"></svg></button>
          </div>
          <div class="view">
            <svg class="scene" viewBox="0 0 1237 543" preserveAspectRatio="xMinYMin slice">
              <svg x="177" y="-8" width="560" height="560" viewBox="0 0 1568 1568" overflow="visible">
                <path d="M248 22L1185 22V1545H152L128 1465L100 1362L75 1243L55 1130L46 1013L40 898L48 778L60 662L80 545L105 430L137 315L175 205z" fill="#fd0209" stroke="#401018" stroke-width="4" />
              </svg>
              <svg x="597" y="-8" width="640" height="560" viewBox="0 0 1568 1568" preserveAspectRatio="none" overflow="visible">
                <path d="M-5 22H1570V832L1452 822L1355 817L975 821L960 697L912 592L848 515L748 458L645 440L543 460L445 520L378 600L327 708L308 828L323 948L370 1055L442 1137L537 1190L635 1208L742 1188L838 1545H-5z" fill="#fd0209" />
                <path d="M830 22L950 75L1035 125L1115 195L1185 275L1250 240L1325 215L1430 212L1400 110L1340 22z" fill="#f00006" />
                <path d="M1570 832L1452 822L1355 817L975 821L960 697L912 592L848 515L748 458L645 440L543 460L445 520L378 600L327 708L308 828L323 948L370 1055L442 1137L537 1190L635 1208L742 1188L838 1545" fill="none" stroke="#401018" stroke-width="3" />
              </svg>
              <svg x="177" y="-8" width="560" height="560" viewBox="0 0 1568 1568" overflow="visible">
                <path d="M1130 22L1080 75L1010 165L940 268L885 362L845 470L812 585L788 697L775 815L768 935L782 1050L800 1165L833 1275L875 1385L920 1480L958 1545H1475L1385 1465L1300 1388L1228 1300L1170 1190L1135 1082L1105 968L1098 850L1105 735L1125 610L1165 498L1220 395L1293 300L1378 215L1475 145L1573 85L1680 45L1747 22z" fill="#d90004" />
                <path d="M788 697L775 815L768 935L782 1050L858 1020L830 930L850 855L868 745zM1747 22L1680 45L1573 85L1475 145L1378 215L1293 300L1220 395L1165 498L1110 445L1175 330L1260 220L1358 130L1475 50L1510 22z" fill="#cf0004" />
                <path d="M893 1225L965 1100L1135 1082L1170 1190L1228 1300L1300 1388L1385 1465L1475 1545H958L920 1480L975 1430L930 1335z" fill="#e20005" />
                <path :d="ringLines" fill="none" stroke="#7c0008" stroke-opacity=".7" stroke-width="4.500" />
                <path d="M248 22H1130L1080 75L1010 165L940 268L885 362L845 470L812 585L788 697L705 690L612 693L520 695L427 688L330 685L240 675L60 662L80 545L105 430L137 315L175 205L220 95z" fill="#06fdfe" />
                <path :d="cyanLines" fill="none" stroke="#00a3ab" stroke-width="4.500" />
                <path d="M1130 22L1080 75L1010 165L940 268L885 362L845 470L812 585L788 697L705 690L612 693L520 695L427 688L330 685L240 675L60 662" fill="none" stroke="#0a4348" stroke-width="5" />
              </svg>
              <svg x="597" y="-8" width="640" height="560" viewBox="0 0 1568 1568" preserveAspectRatio="none" overflow="visible">
                <path :d="rightLines" fill="none" stroke="#7c0008" stroke-opacity=".7" stroke-width="4" />
                <path d="M920 290L1018 272L1058 375L992 453L908 405z" fill="#57708f" stroke="#50202c" stroke-width="3" />
                <path d="M950 283L1018 272L1056 375L1018 420L975 360z" fill="#a04058" fill-opacity=".7" />
                <path d="M908 405L975 360L945 290M950 350h40v-50h30v90h-30M1000 300v90M990 320h50M975 360l17 93M950 310h70" fill="none" stroke="#e02434" stroke-width="3" />
                <path d="M975 372l-28 55M990 385l18 40" stroke="#b9cad8" stroke-width="5" />
                <path d="M75 955L175 940L213 1040L147 1118L60 1072z" fill="#8289a0" stroke="#50202c" stroke-width="3" />
                <path d="M60 1072L137 1030L75 955M105 960v25h25v-35M98 1008h25v30h-25zM145 945v110M137 1030l10 88M165 945v110h35M145 970h40M145 1050h50M150 1070h35" fill="none" stroke="#d81c30" stroke-width="3" />
                <path d="M130 1045l-22 42M155 1060l12 30" stroke="#b4bac8" stroke-width="5" />
              </svg>
              <g class="scene-text">
                <text x="995" y="120">123</text>
                <text x="651" y="357">123</text>
                <text x="40" y="450">X</text>
                <text x="17" y="527">Y</text>
                <text x="56" y="493">Z</text>
              </g>
              <path d="M65 493L55 472" stroke="#e02028" stroke-width="5" />
              <path d="M46 456l13 14-10 4z" fill="#e02028" />
              <circle cx="63" cy="496" r="4" fill="#1c20b8" />
              <path d="M67 502L42 515" stroke="#70c880" stroke-width="1.500" />
              <path d="M24 522l19-12 3 8z" fill="#18c838" />
            </svg>
            <span class="model-info">Model Info:</span>
            <span class="scale"><b>20</b><i></i></span>
          </div>
        </div>

        <div class="toolbar lower">
          <i class="grip g16"></i>
          <div class="group w255"><button v-for="b in collectorTools" :key="b.label" class="cell" :aria-label="b.label"><svg viewBox="0 0 34 34" v-html="icons[b.icon]"></svg></button></div>
          <i class="caret"></i><i class="sep"></i>
          <div class="group w170"><button v-for="b in editTools" :key="b.label" class="cell" :aria-label="b.label"><svg viewBox="0 0 34 34" v-html="icons[b.icon]"></svg></button></div>
          <i class="grip"></i>
          <div class="pick">
            <svg viewBox="0 0 28 34" v-html="icons.autoColor"></svg>
            <select v-model="geomColor" aria-label="Geometry color mode"><option>Auto</option><option>By Topo</option></select>
            <i class="drop"></i>
          </div>
          <div class="group">
            <template v-for="b in shellTools" :key="b.label">
              <button class="cell" :aria-label="b.label"><svg viewBox="0 0 34 34" v-html="icons[b.icon]"></svg></button>
              <i v-if="b.menu" class="caret"></i>
            </template>
          </div>
          <i class="sep"></i>
          <div class="pick comp">
            <svg viewBox="0 0 28 34" v-html="icons.compColor"></svg>
            <select v-model="elemColor" aria-label="Element color mode"><option>By Comp</option><option>By Prop</option></select>
            <i class="drop"></i>
          </div>
          <div class="group">
            <template v-for="b in meshTools" :key="b.label">
              <button class="cell" :aria-label="b.label"><svg viewBox="0 0 34 34" v-html="icons[b.icon]"></svg></button>
              <i v-if="b.menu" class="caret"></i>
            </template>
          </div>
        </div>
        <div class="toolbar favorites">
          <i class="glow"></i>
          <i class="grip g16"></i>
          <button class="star" aria-label="Favorites">
            <svg viewBox="0 0 40 40"><path d="M20 7l4 10h11l-9 7 4 11-10-6-9 7 3-12-9-7h11z" fill="#f2d81c" stroke="#a8952c" stroke-width="1.500" /><path d="M22 17v20l5-4 4 9 4-2-4-8h7z" fill="#fff" stroke="#222" stroke-width="1.500" /></svg>
          </button>
        </div>

        <div class="panel">
          <div class="panel-grid">
            <template v-for="(line, i) in panel" :key="i">
              <template v-for="(cell, j) in line" :key="i + '-' + j">
                <button v-if="cell" class="cmd">{{ cell }}</button>
                <span v-else></span>
              </template>
              <label class="page"><input v-model="page" type="radio" name="page" :value="pages[i]" />{{ pages[i] }}</label>
            </template>
          </div>
        </div>
      </section>
    </main>

    <footer class="status">
      <span class="message">ry Conditions and Solvers</span>
      <span class="field"></span>
      <span class="field">Model</span>
      <span class="field long"></span>
      <div class="ime">
        <i></i><b class="boxed">拼</b><b>英</b>
        <svg width="20" height="26" viewBox="0 0 20 26"><path d="M10 2L17 10Q20 20 11 24Q3 26 2 21Q2 16 9 17L8 20Q13 20 13 14Q13 10 8 6z" fill="#111" /></svg>
        <b>•,</b>
      </div>
    </footer>

    <div class="taskbar">
      <label class="search">
        <svg width="20" height="26" viewBox="0 0 20 26"><circle cx="11" cy="9" r="8" fill="none" stroke="#333" stroke-width="2" /><path d="M6 15l-7 8" stroke="#333" stroke-width="2" /></svg>
        <input type="text" aria-label="搜索" placeholder="在这里输入你要搜索的内容" />
      </label>
      <div class="apps">
        <button aria-label="Cortana"><svg width="26" height="26"><circle cx="13" cy="13" r="10" fill="none" stroke="#fff" stroke-width="2.500" /></svg></button>
        <button aria-label="Task view"><svg width="28" height="26"><path d="M2 1v3h15V1M2 25v-3h15v3M3 8h13v10H3zM24 1v24" fill="none" stroke="#e6e2e6" stroke-width="1.500" /><circle cx="24" cy="9" r="2" fill="#fff" /></svg></button>
        <button aria-label="Browser">
          <svg width="38" height="38" viewBox="-19 -19 38 38"><path v-for="(c, i) in ['#c83ce0', '#f03c50', '#f8a020', '#f0e020', '#30d850', '#38a0f0', '#6878f0']" :key="c" d="M0 0C-6-2-13-6-12-13C-4-20 12-18 15-8C8-12 2-8 0 0z" :fill="c" :transform="`rotate(${i * 51})`" /><circle r="3" fill="#fff" /></svg>
        </button>
        <button aria-label="Internet"><svg width="36" height="36"><circle cx="18" cy="18" r="17" fill="#36b4dc" /><path d="M11 19l14-3q-1-6-7-6-7 1-7 8 1 8 7 8 4 0 6-3" fill="none" stroke="#fff" stroke-width="4" /></svg></button>
        <button class="open" aria-label="File Explorer"><svg width="34" height="30"><path d="M1 2h13l2 3h17v21H1z" fill="#e8a838" /><path d="M1 7h32v19H1z" fill="#fcd870" /><path d="M7 29V17q0-2 2-2h16q2 0 2 2v12h-5v-6h-10v6z" fill="#3f9cc0" /></svg></button>
        <button class="open current" aria-label="HyperMesh"><svg width="30" height="32" viewBox="0 0 34 34" v-html="icons.vAll"></svg></button>
        <button class="open" aria-label="Bandicam"><svg width="36" height="36"><circle cx="18" cy="18" r="16" fill="#0c0808" stroke="#fff" stroke-width="2" /><circle cx="18" cy="18" r="9" fill="#f02028" /></svg></button>
      </div>
      <div class="tray">
        <span class="battery">34%</span>
        <svg width="20" height="12"><path d="M1 11l9-9 9 9" fill="none" stroke="#ddd" stroke-width="2" /></svg>
        <svg width="26" height="26"><circle cx="13" cy="13" r="11" fill="#201414" stroke="#a8a4a4" stroke-width="2.500" /><circle cx="13" cy="13" r="7" fill="#e02828" /></svg>
        <svg width="18" height="26"><rect x="4" y="1" width="10" height="17" rx="2" fill="#fff" /><path d="M2 12v6q0 3 7 3t7-3v-6M9 21v4M4 25h10" fill="none" stroke="#bbb" stroke-width="2" /></svg>
        <svg width="22" height="28" viewBox="0 0 22 28"><ellipse cx="11" cy="14" rx="9" ry="12" fill="#141018" /><ellipse cx="11" cy="19" rx="6" ry="7" fill="#f8f0f8" /><path d="M3 13q8 4 16 0v4q-8 4-16 0z" fill="#c838c0" /><circle cx="8" cy="7" r="2" fill="#fff" /><circle cx="14" cy="7" r="2" fill="#fff" /><path d="M4 26h6M12 26h7" stroke="#e0a020" stroke-width="3" /><path d="M15 1l6 1-2 6z" fill="#c838c0" /></svg>
        <svg width="26" height="16"><path d="M1 1h21v13H1zM23 5h2v5" fill="none" stroke="#ddd" stroke-width="1.500" /><path d="M3 3h5v9H3z" fill="#fff" /></svg>
        <svg width="22" height="22"><g fill="none" stroke="#aaa6a4" stroke-width="1.500"><path d="M1 20Q2 3 20 1" /><path d="M6 20Q7 8 20 6" /><path d="M11 20Q12 12 20 11" /></g><circle cx="18" cy="18" r="2.500" fill="#ddd" /></svg>
        <svg width="22" height="20"><path d="M1 7h4l6-6v18l-6-6H1z" fill="none" stroke="#ddd" stroke-width="1.500" /><path d="M13 7q2 3 0 6M16 5q4 5 0 10M18 2q6 8 0 16" fill="none" stroke="#ccc" stroke-width="1.500" /></svg>
        <span class="lang">英</span>
        <span class="clock"><span>13:58</span><span>2020/9/27</span></span>
      </div>
    </div>
  </div>
</template>

<style>
html,
body {
  height: 100%;
  overflow: hidden;
}
</style>

<style scoped>
.app {
  display: flex;
  flex-direction: column;
  height: 100vh;
  overflow: hidden;
  background: #f3ebf5;
  color: #332e36;
  font-family: "Liberation Sans", "Noto Sans CJK SC", sans-serif;
  font-size: 16px;
}
button {
  border: 0;
  padding: 0;
  margin: 0;
  background: none;
  color: inherit;
  font: inherit;
}
button svg { display: block; }

.title-bar {
  position: relative;
  display: flex;
  flex: none;
  align-items: center;
  justify-content: space-between;
  height: 34px;
  border-bottom: 1px solid #ece6ee;
  background: #fefbff;
  font-family: "Open Sans", "Noto Sans", sans-serif;
  font-size: 19px;
}
.title { margin-left: -2px; color: #2c282e; line-height: 32px; white-space: nowrap; }
.watermark {
  position: absolute;
  left: 50%;
  top: 3px;
  width: 320px;
  margin-left: -160px;
  color: #fff;
  font: 700 27px/30px "DejaVu Sans", sans-serif;
  text-align: center;
  white-space: nowrap;
  text-shadow: 0 0 2px #4c464e, 0 0 2px #4c464e, 0 0 2px #4c464e, 0 0 3px #4c464e, 0 0 3px #4c464e, 0 0 4px #6c666e, 0 0 4px #6c666e;
}
.watermark small { font-size: 22px; }
.win-buttons { display: flex; gap: 55px; margin-right: -2px; }

.menu-bar {
  display: flex;
  flex: none;
  gap: 20px;
  height: 27px;
  padding-left: 18px;
  background: #fefbff;
  color: #4a454c;
  font-family: "Open Sans", "Noto Sans", sans-serif;
  font-size: 19px;
  line-height: 28px;
}
.menu-bar button { white-space: nowrap; }

.toolbar {
  display: flex;
  flex: none;
  align-items: center;
  height: 56px;
}
.toolbar.top { height: 54px; padding-bottom: 2px; }
.group { display: flex; flex: none; align-items: center; }
.cell { display: flex; flex: 0 0 42px; justify-content: center; }
.cell svg { flex: none; width: 34px; height: 34px; }
.g0 { padding-left: 4px; }
.g0 .cell, .g1 .cell { flex-basis: 43px; }
.g1 { margin-left: -2px; }
.g2 { width: 426px; margin-left: -6px; }
.g3, .g4 { margin-left: -4px; }
.g5 { width: 381px; }
.g2 .cell, .g5 .cell, .w255 .cell, .w170 .cell { flex: 1 1 0; }
.g6 { margin-left: -3px; }
.g6 .cell { flex-basis: 44px; }
.w255 { width: 255px; }
.w170 { width: 170px; }
.caret { display: flex; flex: 0 0 15px; justify-content: center; }
.caret::before { content: ""; border: 4px solid transparent; border-top: 5px solid #1c181e; border-bottom: 0; }
.sep { flex: none; width: 1px; height: 25px; margin: 0 8px; background: #b0aab4; }
.sep.tight { margin: 0 6px; }
.grip {
  flex: none;
  width: 4px;
  height: 36px;
  margin: 0 9px;
  background: radial-gradient(circle at 2px 2px, #2c282e 2px, transparent 2px) 0 0 / 4px 11px repeat-y;
}
.grip.g16 { margin: 0 6px; }
.grip.faint { background-image: radial-gradient(circle at 2px 2px, #c8c2cc 1px, transparent 2px); }

.main { display: flex; flex: 1; min-height: 0; }
.browser { display: flex; flex: 0 0 433px; flex-direction: column; }
.tabs { position: relative; display: flex; flex: none; gap: 5px; height: 34px; }
.tabs button {
  height: 33px;
  padding-top: 12px;
  border-top: 1px solid #fff;
  border-right: 2px solid #847e86;
  border-radius: 0 2px 0 0;
  line-height: 20px;
}
.tabs button:nth-child(1) { width: 64px; padding-right: 19px; text-align: right; }
.tabs button:nth-child(2) { width: 79px; font-size: 17px; font-weight: 700; color: #111; padding-top: 10px; }
.tabs button:nth-child(3) { width: 79px; padding-right: 10px; }
.tabs .close { position: absolute; top: -7px; right: 12px; height: 12px; padding: 0; border: 0; }
.pane {
  display: flex;
  flex: 1;
  flex-direction: column;
  min-height: 0;
  margin-right: 8px;
  border-top: 1px solid #fff;
  border-right: 2px solid #8f8992;
  border-bottom: 2px solid #8f8992;
}
.row-create { display: flex; flex: none; height: 39px; align-items: center; padding-bottom: 4px; }
.row-create .cell { flex-basis: 44px; }
.row-select { display: flex; flex: none; height: 40px; align-items: center; padding-bottom: 4px; }
.row-select .cell { flex-basis: 43px; }
.row-select .cell.wide { flex-basis: 47px; }
.row-select .caret { flex-basis: 14px; }
.edge { flex: 0 0 12px; }
.edge svg { width: 10px; height: 34px; }
.tree-wrap { flex: 1; min-height: 0; overflow: hidden; margin-right: 3px; border-top: 2px solid #a7a1aa; background: #fefbff; }
.tree { width: 100%; border-collapse: collapse; table-layout: fixed; color: #36313a; }
.tree th {
  height: 34px;
  padding: 0;
  border-right: 1px solid #c8c2cc;
  background: linear-gradient(#fcf8fd 30%, #dcd6e0);
  font-size: 20px;
  font-weight: 400;
}
.tree th:last-child { border-right: 0; }
.tree .c-name { width: 128px; }
.tree .c-id { width: 26px; }
.tree .c-color { width: 30px; }
.wheel {
  display: block;
  width: 21px;
  height: 21px;
  margin-left: 2px;
  border-radius: 50%;
  background: conic-gradient(#30e050, #20c8c0 25deg, #f0f040 80deg, #f03820 120deg, #e02060 180deg, #7020c0 220deg, #2020e0 280deg, #20b8f0 340deg, #30e050);
}
.tree td { height: 26px; padding: 0; border-bottom: 1px solid #f2edf4; white-space: nowrap; overflow: hidden; line-height: 20px; }
.tree td svg { margin-right: 15px; vertical-align: top; }
.depth0 { text-indent: -25px; }
.tree td.depth1 { padding-left: 6px; }
.tree .id { padding-right: 4px; text-align: right; }
.tree .bold { color: #0c0a0e; font-weight: 700; }
.swatch { display: block; width: 16px; height: 16px; margin-left: 3px; border: 1px solid #2c1c20; outline: 1px solid #4c3c40; outline-offset: -2px; }
.pane-foot { display: flex; flex: none; justify-content: flex-end; height: 10px; margin-right: 3px; padding: 2px 15px 0 0; border-top: 1px solid #ddd6e0; }
.pane-foot i { height: 0; border: 8px solid transparent; border-top: 0; border-bottom: 8px solid #47424a; }

.work { display: flex; flex: 1; flex-direction: column; min-width: 0; border-left: 2px solid #8f8992; overflow: hidden; }
.stage { display: flex; flex: 1; min-height: 0; }
.side { display: flex; flex: 0 0 66px; flex-direction: column; align-items: center; padding-left: 2px; overflow: hidden; }
.hgrip { flex: none; width: 36px; height: 4px; margin: 5px 0 8px; background: radial-gradient(circle at 2px 2px, #2c282e 2px, transparent 2px) 0 0 / 11px 4px repeat-x; }
.side-cell { display: flex; flex: 0 0 42px; align-items: center; }
.side-cell:nth-of-type(n + 7) { flex-basis: 44px; }
.side-cell svg { width: 34px; height: 34px; }
.tile {
  flex: none;
  width: 42px;
  height: 41px;
  margin-bottom: 2px;
  padding: 2px 3px;
  border: 1px solid #a08c80;
  background: linear-gradient(#ffe6a0, #fbb070);
  overflow: hidden;
}
.tile svg { width: 34px; height: 34px; }
.tile.last { height: 13px; }
.view {
  position: relative;
  flex: 1;
  min-width: 0;
  overflow: hidden;
  background: linear-gradient(#2d527f, #4e6a8f 24%, #62759a 42%, #74829b 58%, #8b8fa0 78%, #a39fa6);
}
.scene { display: block; width: 100%; height: 100%; }
.scene-text { fill: #eceaf2; font-size: 17px; }
.model-info { position: absolute; top: 12px; left: 1135px; color: #f8d0d4; font-size: 20px; line-height: 24px; white-space: nowrap; }
.scale { position: absolute; left: 1136px; right: 0; bottom: 0; display: flex; align-items: center; gap: 12px; height: 20px; color: #3c3840; font-size: 16px; }
.scale i { flex: 1; height: 7px; border: solid #3c3840; border-width: 0 0 3px 3px; }

.lower { height: 48px; padding-left: 4px; }
.lower .caret { flex-basis: 15px; }
.lower .caret + .sep { margin: 0 8px 0 6px; }
.pick { position: relative; display: flex; flex: none; align-items: center; }
.pick svg { width: 24px; height: 34px; }
.pick select {
  width: 122px;
  height: 33px;
  padding: 0 0 0 5px;
  border: 0;
  border-right: 24px solid #f6f0f8;
  background: #fefbff;
  color: #26222a;
  font: 16px "Liberation Sans", sans-serif;
  appearance: none;
}
.pick.comp { margin: 0 1px 0 2px; }
.pick.comp select { width: 134px; padding-left: 7px; }
.drop { position: absolute; right: 6px; top: 14px; border: 6px solid transparent; border-top: 7px solid #111; border-bottom: 0; }
.favorites { position: relative; height: 48px; padding-left: 4px; }
.glow { position: absolute; left: 3px; top: -17px; width: 86px; height: 86px; border-radius: 50%; background: rgba(246, 238, 130, 0.55); }
.favorites .grip, .star { position: relative; }
.star { width: 40px; height: 40px; border: 1px solid #bcae84; background: linear-gradient(#fbf2a8, #f3dc7c); }
.star svg { width: 38px; height: 38px; overflow: visible; }

.panel { flex: none; margin: 0 0 4px 4px; padding: 12px 0 5px; border-bottom: 2px solid #9c96a0; }
.panel-grid {
  display: grid;
  grid-template-columns: repeat(4, minmax(0, 256fr)) minmax(0, 236fr) 42px;
  grid-template-rows: repeat(7, 1fr);
  height: 213px;
  font-size: 20px;
}
.cmd {
  border: solid;
  border-width: 2px;
  border-color: #fcf8fd #857f88 #857f88 #f9f4fa;
  line-height: 24px;
}
.page { display: flex; align-items: center; gap: 12px; padding-left: 12px; white-space: nowrap; }
.page input {
  flex: none;
  width: 16px;
  height: 16px;
  margin: 0;
  border: 2px solid;
  border-color: #5c565e #fefbff #fefbff #5c565e;
  border-radius: 50%;
  background: #fdf9fe;
  appearance: none;
}
.page input:checked { background: radial-gradient(circle, #000 3px, #fdf9fe 4px); }

.status { display: flex; flex: none; height: 35px; border-bottom: 1px solid #c8c2c8; font-size: 20px; line-height: 32px; }
.message { flex: 1; padding-top: 4px; text-indent: -4px; white-space: nowrap; }
.field { flex: none; box-sizing: border-box; width: 186px; height: 31px; margin: 3px 5px 0 0; border: solid #5c565e; border-width: 3px 0 0 3px; line-height: 28px; }
.field.long { width: 198px; margin-right: 0; }
.ime { display: flex; flex: 0 0 129px; box-sizing: border-box; gap: 10px; align-items: center; height: 34px; margin-top: 1px; padding-left: 6px; background: #fefbff; color: #111; overflow: hidden; white-space: nowrap; }
.ime i { flex: none; width: 0; height: 30px; border-left: 3px dotted #c8c2cc; }
.ime b { font: 700 23px/28px "Noto Sans CJK SC", sans-serif; }
.ime svg { flex: none; }
.ime .boxed { border: 1px solid #444; font-weight: 400; font-size: 21px; line-height: 24px; }

.taskbar {
  display: flex;
  flex: none;
  height: 59px;
  background: linear-gradient(90deg, #4a4139 30%, #48423e 36%, #25202b 39%, #29242c 60%, #28232c 66%, #4a4743 71%, #454343 82%, #4a4240 92%, #2b2629);
}
.search { display: flex; flex: 0 0 495px; align-items: center; gap: 17px; border: solid #d8d0dc; border-width: 0 2px 2px 0; background: #f5edf7; }
.search input { flex: 1; min-width: 0; padding: 0; border: 0; background: none; font: 24px "Noto Sans CJK SC", sans-serif; outline: none; }
.search input::placeholder { color: #3c363e; opacity: 1; }
.apps { display: flex; flex: none; }
.apps button { display: flex; align-items: center; justify-content: center; width: 76px; }
.apps button:first-child { width: 71px; }
.apps .open { background: linear-gradient(#8fb0d0, #8fb0d0) center bottom / 61px 3px no-repeat; }
.apps .current { background: linear-gradient(#8fb0d0, #8fb0d0) center bottom / 76px 3px no-repeat #6b6767; }
.tray { display: flex; flex: 1; align-items: center; justify-content: flex-end; gap: 14px; color: #f0ecf0; min-width: 0; }
.tray svg { flex: none; }
.battery {
  position: relative;
  width: 63px;
  height: 34px;
  border: 3px solid #fff;
  background: linear-gradient(90deg, #208c48 20px, #333 20px);
  box-sizing: border-box;
  color: #dde6dd;
  font: 18px/28px "Open Sans", sans-serif;
  text-align: center;
}
.battery::after { content: ""; position: absolute; right: -6px; top: 6px; width: 3px; height: 16px; background: #fff; }
.lang { font: 25px/30px "Noto Sans CJK SC", sans-serif; }
.clock { display: flex; flex: none; flex-direction: column; align-items: center; width: 93px; margin-right: -8px; font: 19px/28px "Open Sans", sans-serif; }
</style>
